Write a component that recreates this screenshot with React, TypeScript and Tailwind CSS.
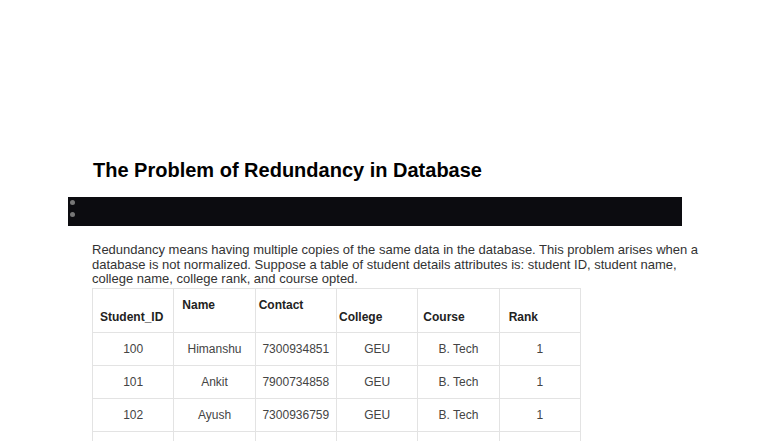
export default function App() {
  const rows = [
    ["100", "Himanshu", "7300934851", "GEU", "B. Tech", "1"],
    ["101", "Ankit", "7900734858", "GEU", "B. Tech", "1"],
    ["102", "Ayush", "7300936759", "GEU", "B. Tech", "1"],
    ["", "", "", "", "", ""],
  ];
  const font = { fontFamily: '"Liberation Sans", Arial, sans-serif' };
  return (
    <div className="w-[784px] h-[441px] overflow-hidden bg-white text-[#222]" style={font}>
      <div className="pt-[156px] pl-[93px] h-[197px]">
        <h1 className="text-[20px] font-bold leading-[28px] text-black">The Problem of Redundancy in Database</h1>
      </div>
      <div className="ml-[68px] w-[614px] h-[29px] bg-[#0c0c10] flex flex-col gap-[7px] pt-[3px] pl-[2px]">
        <div className="w-[5px] h-[5px] rounded-full bg-[#777]" />
        <div className="w-[5px] h-[5px] rounded-full bg-[#777]" />
      </div>
      <p className="ml-[92px] w-[610px] mt-[17px] text-[13px] leading-[14.5px] text-[#333]">
        Redundancy means having multiple copies of the same data in the database. This problem arises when a database is not normalized. Suppose a table of student details attributes is: student ID, student name, college name, college rank, and course opted.
      </p>
      <table className="ml-[92px] mt-[1px] w-[489px] border-collapse table-fixed text-[12px]">
        <thead>
          <tr className="h-[44px]">
            {[
              ["Student_ID", "align-bottom pb-[6px] pl-[7px]"],
              ["Name", "align-top pt-[7px] pl-[8px]"],
              ["Contact", "align-top pt-[7px] pl-[3px]"],
              ["College", "align-bottom pb-[6px] pl-[2px]"],
              ["Course", "align-bottom pb-[6px] pl-[5px]"],
              ["Rank", "align-bottom pb-[6px] pl-[9px]"],
            ].map(([t, c]) => (
              <th key={t} className={`border border-[#e3e3e3] text-left font-bold text-[#222] ${c}`}>{t}</th>
            ))}
          </tr>
        </thead>
        <tbody>
          {rows.map((r, i) => (
            <tr key={i} className="h-[33px]">
              {r.map((v, j) => (
                <td key={j} className="border border-[#e3e3e3] text-center text-[#444]">{v}</td>
              ))}
            </tr>
          ))}
        </tbody>
      </table>
    </div>
  );
}
